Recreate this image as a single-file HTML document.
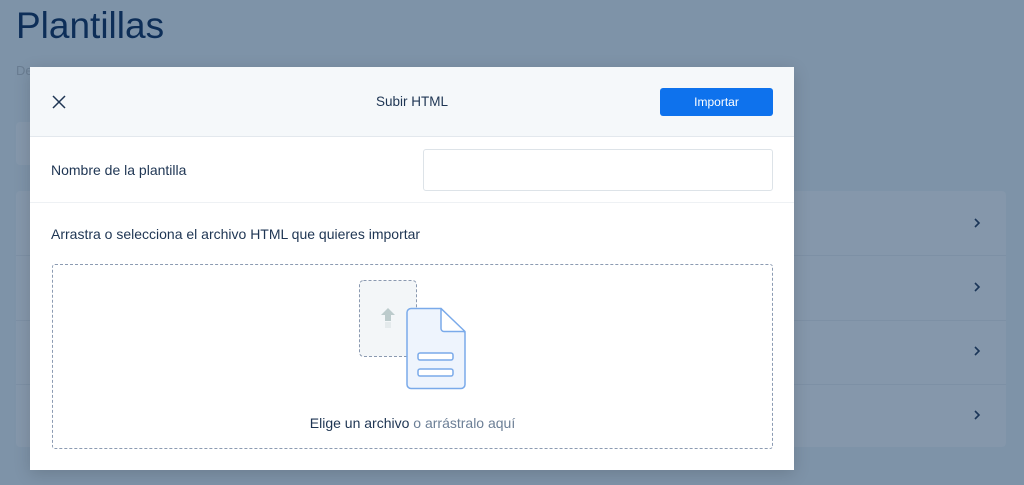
<!DOCTYPE html>
<html><head><meta charset="utf-8"><style>
*{box-sizing:border-box;margin:0;padding:0}
body{width:1024px;height:485px;overflow:hidden;background:#7e93a8;font-family:"Liberation Sans",sans-serif;position:relative}
.h1{position:absolute;left:16px;top:5px;font-size:37px;color:#0d2e58;}
.sub{position:absolute;left:16px;top:63px;font-size:13px;color:#6a7d92}
.card{position:absolute;background:#8597ab;border-radius:4px}
.row{position:absolute;left:16px;width:990px;height:1px;background:#7d90a5}
.chev{position:absolute;left:972px;width:10px;height:10px}
.modal{position:absolute;left:30px;top:67px;width:764px;height:403px;background:#fff;box-shadow:0 4px 16px rgba(0,0,0,.15)}
.hdr{height:70px;background:#f5f8fa;border-bottom:1px solid #e3e8ed;position:relative}
.title{position:absolute;left:0;width:764px;top:27px;text-align:center;font-size:13.5px;color:#1e3553}
.btn{position:absolute;left:630px;top:21px;width:113px;height:28px;background:#0e72ed;border-radius:3px;color:#fff;font-size:12px;text-align:center;line-height:28px}
.lbl{position:absolute;font-size:14px;color:#1e3553}
.inp{position:absolute;left:393px;top:82px;width:350px;height:42px;border:1px solid #dde3e8;border-radius:3px}
.sep{position:absolute;left:0;top:135px;width:764px;height:1px;background:#eef1f4}
.drop{position:absolute;left:22px;top:197px;width:721px;height:185px;border:1px dashed #8c9bb2;border-radius:3px}
</style></head><body>
<div class="h1">Plantillas</div>
<div class="sub">De</div>
<div class="card" style="left:16px;top:122px;width:30px;height:43px"></div>
<div class="card" style="left:16px;top:191px;width:990px;height:256px"></div>
<div class="row" style="top:255px"></div><div class="row" style="top:320px"></div><div class="row" style="top:384px"></div>
<svg class="chev" style="top:218px" viewBox="0 0 10 10"><path d="M3 1l4 4-4 4" fill="none" stroke="#1a3558" stroke-width="1.6"/></svg>
<svg class="chev" style="top:282px" viewBox="0 0 10 10"><path d="M3 1l4 4-4 4" fill="none" stroke="#1a3558" stroke-width="1.6"/></svg>
<svg class="chev" style="top:346px" viewBox="0 0 10 10"><path d="M3 1l4 4-4 4" fill="none" stroke="#1a3558" stroke-width="1.6"/></svg>
<svg class="chev" style="top:410px" viewBox="0 0 10 10"><path d="M3 1l4 4-4 4" fill="none" stroke="#1a3558" stroke-width="1.6"/></svg>
<div class="modal">
 <div class="hdr">
  <svg style="position:absolute;left:22px;top:28px" width="14" height="14" viewBox="0 0 14 14"><path d="M1 1l12 12M13 1L1 13" stroke="#1e3553" stroke-width="1.5"/></svg>
  <div class="title">Subir HTML</div>
  <div class="btn">Importar</div>
 </div>
 <div class="lbl" style="left:21px;top:95px">Nombre de la plantilla</div>
 <div class="inp"></div>
 <div class="sep"></div>
 <div class="lbl" style="left:21px;top:159px">Arrastra o selecciona el archivo HTML que quieres importar</div>
 <div class="drop">
  <svg style="position:absolute;left:300px;top:10px" width="120" height="120" viewBox="0 0 120 120">
   <rect x="6.5" y="5.5" width="57" height="76" rx="4" fill="#f3f6f8" stroke="#8a99b0" stroke-dasharray="3 2"/>
   <path d="M35 33l-7 7h4v6h6v-6h4z" fill="#bccbcc"/>
   <path d="M32 48h6M32 50h6M32 52h6" stroke="#d6dfe0" stroke-width="1"/>
   <path d="M58 33.5h30l24 24v52a4 4 0 0 1-4 4H58a4 4 0 0 1-4-4V37.5a4 4 0 0 1 4-4z" fill="#eef4fd" stroke="#7aaaea" stroke-width="1.5"/>
   <path d="M88 33.5v20a3 3 0 0 0 3 3h21z" fill="#fff" stroke="#7aaaea" stroke-width="1.5" stroke-linejoin="round"/>
   <rect x="65" y="78" width="35" height="7" rx="2" fill="#fff" stroke="#7aaaea" stroke-width="1.5"/>
   <rect x="65" y="94" width="35" height="7" rx="2" fill="#fff" stroke="#7aaaea" stroke-width="1.5"/>
  </svg>
  <div style="position:absolute;left:0;width:719px;top:150px;text-align:center;font-size:14px;color:#1e3553">Elige un archivo <span style="color:#6c7f96">o arrástralo aquí</span></div>
 </div>
</div>
</body></html>
